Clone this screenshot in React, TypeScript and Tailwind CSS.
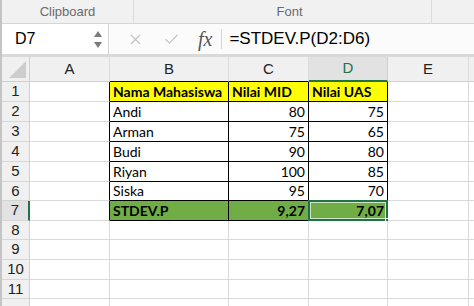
import React from "react";
import { X, Check } from "lucide-react";

const cols = ["A", "B", "C", "D", "E", ""];
const rowHeights = [20, 20, 20, 20, 20, 19, 20, 19, 20, 20, 19, 20];

const data: Record<number, string[]> = {
  1: ["Nama Mahasiswa", "Nilai MID", "Nilai UAS"],
  2: ["Andi", "80", "75"],
  3: ["Arman", "75", "65"],
  4: ["Budi", "90", "80"],
  5: ["Riyan", "100", "85"],
  6: ["Siska", "95", "70"],
  7: ["STDEV.P", "9,27", "7,07"],
};

const Ribbon = () => (
  <div className="flex h-[24px] bg-[#f1f1f1] border-b border-[#d6d6d6] text-[13px] text-[#6b6b6b] font-['Liberation_Sans',sans-serif]">
    <div className="w-[132px] flex items-center justify-center border-r border-[#dcdcdc]">
      Clipboard
    </div>
    <div className="w-[298px] flex items-center justify-center pl-[14px] border-r border-[#dcdcdc]">
      Font
    </div>
    <div className="flex-1" />
  </div>
);

const FormulaBar = () => (
  <div className="flex h-[33px] bg-[#fbfbfb] border-b-[3px] border-[#d9d9d9] font-['Liberation_Sans',sans-serif]">
    <div className="w-[107px] flex items-center justify-between pl-[13px] pr-[6px] bg-white border-r border-[#d4d4d4]">
      <span className="text-[16px] text-black">D7</span>
      <div className="flex flex-col gap-[5px] items-center">
        <div className="w-0 h-0 border-l-[4px] border-r-[4px] border-b-[6px] border-l-transparent border-r-transparent border-b-[#7a7a7a]" />
        <div className="w-0 h-0 border-l-[4px] border-r-[4px] border-t-[6px] border-l-transparent border-r-transparent border-t-[#7a7a7a]" />
      </div>
    </div>
    <div className="flex items-center pl-[18px]">
      <X className="w-[17px] h-[17px] text-[#c2c2c2]" strokeWidth={1.6} />
      <Check className="w-[17px] h-[17px] text-[#c2c2c2] ml-[19px]" strokeWidth={1.6} />
      <span className="ml-[18px] text-[20px] italic text-[#555] font-['Liberation_Serif',serif] leading-none">
        fx
      </span>
      <div className="ml-[9px] w-px h-[20px] bg-[#d4d4d4]" />
      <span className="ml-[7px] text-[17px] text-black">=STDEV.P(D2:D6)</span>
    </div>
  </div>
);

const Grid = () => {
  const cells: React.ReactNode[] = [];
  cells.push(
    <div key="corner" className="relative h-[25px] bg-[#f0f0f0] border-r border-b border-[#cfcfcf]">
      <svg className="absolute right-[3px] bottom-[3px]" width="17" height="17" viewBox="0 0 17 17">
        <polygon points="17,0 17,17 0,17" fill="#cdcdcd" />
      </svg>
    </div>
  );
  cols.forEach((c, i) => {
    const sel = c === "D";
    const black = c === "B" || c === "C";
    cells.push(
      <div
        key={"h" + i}
        className={`h-[25px] flex items-center justify-center text-[15px] border-r ${
          sel
            ? "bg-[#e2e2e2] text-[#217346] border-b-2 border-b-[#217346] border-r-[#cfcfcf]"
            : black
            ? "bg-[#f0f0f0] text-[#222] border-b border-b-black border-r-[#dcdcdc]"
            : "bg-[#f0f0f0] text-[#222] border-b border-b-[#cfcfcf] border-r-[#dcdcdc]"
        }`}
      >
        {c}
      </div>
    );
  });

  rowHeights.forEach((h, ri) => {
    const r = ri + 1;
    const selRow = r === 7;
    cells.push(
      <div
        key={"rh" + r}
        style={{ height: h }}
        className={`flex items-center justify-center text-[15px] text-[#222] border-b border-[#d6d6d6] ${
          selRow ? "bg-[#e2e2e2] border-r-2 border-r-[#217346]" : "bg-[#f0f0f0] border-r border-r-[#cfcfcf]"
        }`}
      >
        {r <= 11 ? r : ""}
      </div>
    );
    cols.forEach((c, ci) => {
      const inTable = r <= 7 && ci >= 1 && ci <= 3;
      const rightBlack = inTable || (ci === 0 && r <= 7);
      const row = data[r];
      const text = inTable ? row[ci - 1] : "";
      const header = r === 1 && inTable;
      const total = r === 7 && inTable;
      const numeric = inTable && ci >= 2 && r >= 2;
      const selected = r === 7 && c === "D";
      cells.push(
        <div
          key={r + "-" + ci}
          style={{ height: h }}
          className={`relative flex items-center px-[3px] whitespace-nowrap text-[14px] leading-none text-black font-['Lato',sans-serif] border-r border-b ${
            rightBlack ? "border-r-black" : "border-r-[#d9d9d9]"
          } ${inTable ? "border-b-black" : "border-b-[#d9d9d9]"} ${
            header ? "bg-[#ffff00] font-bold" : total ? "bg-[#70ad47] font-bold" : "bg-white"
          } ${numeric ? "justify-end" : "justify-start"}`}
        >
          {text}
          {selected && (
            <>
              <div className="absolute -left-px -top-px -right-px -bottom-px border-2 border-[#217346] shadow-[inset_0_0_0_1px_#cfe6c4] pointer-events-none" />
              <div className="absolute -right-[4px] -bottom-[4px] w-[6px] h-[6px] bg-[#217346] border border-white" />
            </>
          )}
        </div>
      );
    });
  });

  return (
    <div className="grid grid-cols-[28px_80px_119px_80px_79px_81px_1fr] font-['Liberation_Sans',sans-serif]">
      {cells}
    </div>
  );
};

export default function App() {
  return (
    <div className="w-[474px] h-[306px] overflow-hidden bg-white border-l-2 border-[#c4c4c4]">
      <Ribbon />
      <FormulaBar />
      <Grid />
    </div>
  );
}
